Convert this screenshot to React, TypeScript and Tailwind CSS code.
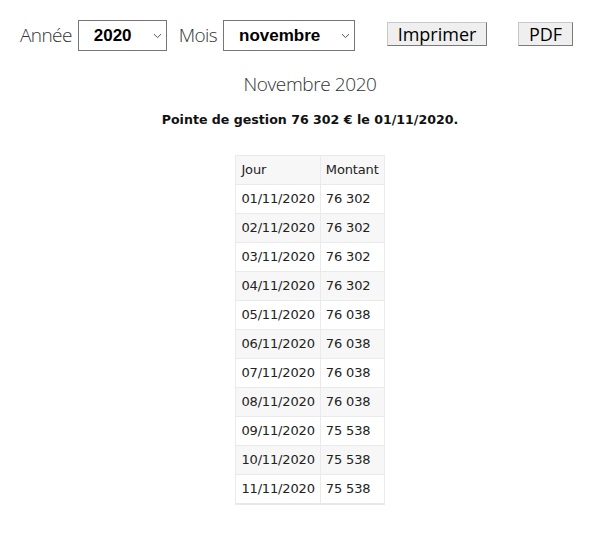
import React from "react";

const rows: [string, string][] = [
  ["01/11/2020", "76 302"],
  ["02/11/2020", "76 302"],
  ["03/11/2020", "76 302"],
  ["04/11/2020", "76 302"],
  ["05/11/2020", "76 038"],
  ["06/11/2020", "76 038"],
  ["07/11/2020", "76 038"],
  ["08/11/2020", "76 038"],
  ["09/11/2020", "75 538"],
  ["10/11/2020", "75 538"],
  ["11/11/2020", "75 538"],
];

function Chevron() {
  return (
    <svg
      className="pointer-events-none absolute right-[5px] top-1/2 -translate-y-1/2"
      width="9"
      height="6"
      viewBox="0 0 9 6"
    >
      <path d="M1 1.2 L4.5 4.6 L8 1.2" fill="none" stroke="#555" strokeWidth="1" />
    </svg>
  );
}

function Select({ value, width, options }: { value: string; width: string; options: string[] }) {
  return (
    <div className={`relative ${width}`}>
      <select
        defaultValue={value}
        className="h-[31px] w-full appearance-none border border-[#767676] bg-white pl-[15px] text-[17px] font-bold text-black outline-none [font-family:'Liberation_Sans',Arial,sans-serif]"
      >
        {options.map((o) => (
          <option key={o}>{o}</option>
        ))}
      </select>
      <Chevron />
    </div>
  );
}

export default function App() {
  return (
    <div className="min-h-[538px] w-[601px] bg-white text-[#222]">
      <div className="flex items-center pl-[20px] pt-[20px] [font-family:'Open_Sans',sans-serif]">
        <span className="text-[19px] font-light tracking-[-0.6px] text-[#333]">Année</span>
        <div className="ml-[6px]">
          <Select value="2020" width="w-[89px]" options={["2019", "2020", "2021"]} />
        </div>
        <span className="ml-[12px] text-[19px] font-light tracking-[-0.6px] text-[#333]">Mois</span>
        <div className="ml-[6px]">
          <Select value="novembre" width="w-[132px]" options={["octobre", "novembre", "décembre"]} />
        </div>
        <button className="mb-[3px] ml-[32px] h-[24px] w-[100px] border border-t-[#c8c8c8] border-l-[#c8c8c8] border-r-[#7a7a7a] border-b-[#7a7a7a] bg-[#efefef] text-[18px] leading-none text-black">
          Imprimer
        </button>
        <button className="mb-[3px] ml-[31px] h-[24px] w-[55px] border border-t-[#c8c8c8] border-l-[#c8c8c8] border-r-[#7a7a7a] border-b-[#7a7a7a] bg-[#efefef] text-[18px] leading-none text-black">
          PDF
        </button>
      </div>
      <div className="ml-[20px] w-[580px] text-center">
        <div className="mt-[20px] text-[19px] font-light leading-[26px] tracking-[-0.4px] text-[#333] [font-family:'Open_Sans',sans-serif]">
          Novembre 2020
        </div>
        <div className="mt-[15px] text-[12.6px] font-bold leading-[16px] text-[#111] [font-family:'DejaVu_Sans',Verdana,sans-serif]">
          Pointe de gestion 76 302 € le 01/11/2020.
        </div>
        <table className="mx-auto mt-[27px] border-collapse border-b-2 border-b-[#e8e8e8] text-left text-[13px] leading-[16px] tracking-[-0.15px] text-[#222] [font-family:'DejaVu_Sans',Verdana,sans-serif]">
          <thead>
            <tr className="bg-[#f7f7f7]">
              <th className="border border-[#eaeaea] px-[5px] py-[6px] font-normal">Jour</th>
              <th className="border border-[#eaeaea] px-[5px] py-[6px] font-normal">Montant</th>
            </tr>
          </thead>
          <tbody>
            {rows.map(([d, m], i) => (
              <tr key={d} className={i % 2 === 1 ? "bg-[#f7f7f7]" : "bg-white"}>
                <td className="border border-[#eaeaea] px-[5px] py-[6px]">{d}</td>
                <td className="border border-[#eaeaea] px-[5px] py-[6px]">{m}</td>
              </tr>
            ))}
          </tbody>
        </table>
      </div>
    </div>
  );
}
